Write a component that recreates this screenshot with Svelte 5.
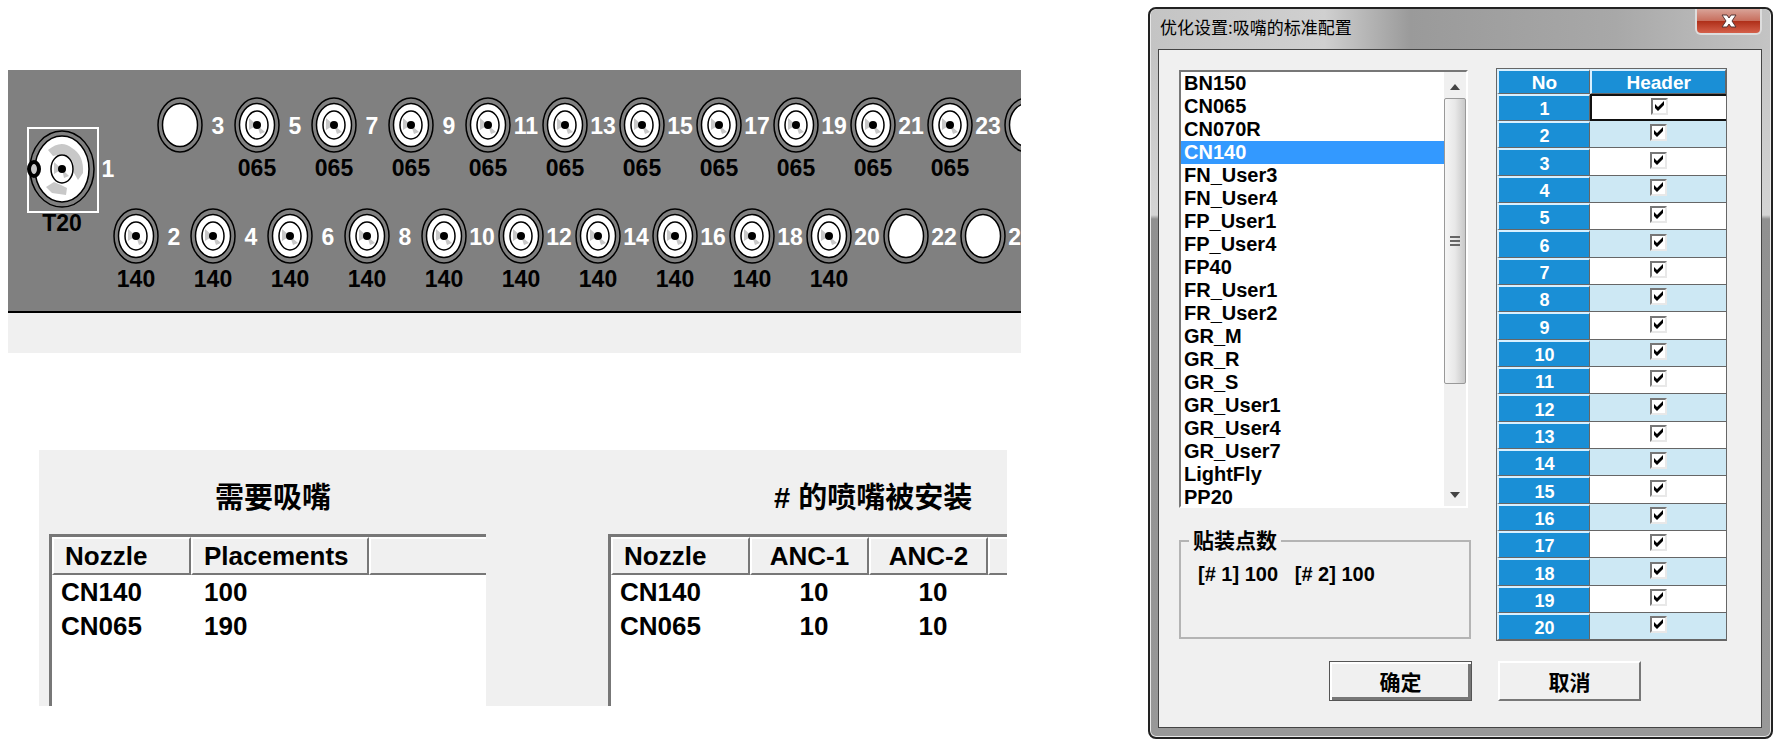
<!--
  App.svelte
  吸嘴配置: nozzle station map, nozzle lists and the standard setup dialog
-->
<script lang="ts">
  interface Station {
    no: number;
    x: number;
    y: number;
    code: string;
  }

  // spacing between stations on the map
  const pitch = 77;

  // odd stations on the upper row, even stations on the lower row
  const upper: Station[] = Array.from({ length: 12 }, (_, i) => ({
    no: 3 + i * 2,
    x: 172 + i * pitch,
    y: 55,
    code: i > 0 && i < 11 ? "065" : "",
  }));

  const lower: Station[] = Array.from({ length: 12 }, (_, i) => ({
    no: 2 + i * 2,
    x: 128 + i * pitch,
    y: 166,
    code: i < 10 ? "140" : "",
  }));

  const stations: Station[] = [...upper, ...lower];

  const required = [
    { nozzle: "CN140", placements: 100 },
    { nozzle: "CN065", placements: 190 },
  ];

  const installed = [
    { nozzle: "CN140", anc1: 10, anc2: 10 },
    { nozzle: "CN065", anc1: 10, anc2: 10 },
  ];

  const nozzleNames = [
    "BN150", "CN065", "CN070R", "CN140", "FN_User3", "FN_User4", "FP_User1",
    "FP_User4", "FP40", "FR_User1", "FR_User2", "GR_M", "GR_R", "GR_S",
    "GR_User1", "GR_User4", "GR_User7", "LightFly", "PP20",
  ];

  let selected = $state("CN140");
  let headers: boolean[] = $state(new Array(20).fill(true));
</script>

<main>
  <div class="boards">
    <section class="map">
      <svg class="stations" role="img" aria-label="ANC">
        <rect x="20" y="58" width="70" height="84" fill="none" stroke="#fff" stroke-width="2" />
        <ellipse class="ring" cx="54" cy="99" rx="32" ry="38" />
        <ellipse class="ring white" cx="54" cy="99" rx="27" ry="33" />
        <path d="M40 80q13-11 24-2 12 7 11 25l-5 7-4-7-1-11-10-8-10 2z" fill="#c8c8c8" />
        <path d="M38 117l8-5 7 3 6 3-1 7-14-2z" fill="#c8c8c8" />
        <ellipse class="ring white" cx="54" cy="99" rx="11" ry="14" />
        <path d="M54 99l-8-7v12zM54 99l2 9 5-2z" fill="#c8c8c8" />
        <circle cx="54" cy="99" r="4" />
        <ellipse cx="26" cy="99" rx="5" ry="7" fill="#c8c8c8" stroke="#000" stroke-width="4" />
        <text class="no" x="100" y="107" text-anchor="middle">1</text>
        <text x="54" y="161" text-anchor="middle">T20</text>

        {#each stations as s}
          <g>
            <ellipse class="ring" cx={s.x} cy={s.y} rx="22" ry="27" />
            <ellipse class="ring white" cx={s.x} cy={s.y} rx="17.5" ry="21.5" />
            {#if s.code}
              <ellipse class="ring white" cx={s.x} cy={s.y} rx="11" ry="14" />
              <path d="M{s.x} {s.y}l-8 -7v12zM{s.x} {s.y}l3 9 5 -2z" fill="#c8c8c8" />
              <circle cx={s.x} cy={s.y} r="4" />
              <text x={s.x} y={s.y + 51} text-anchor="middle">{s.code}</text>
            {/if}
            {#if s.no < 25}
              <text class="no" x={s.x + 38} y={s.y + 9} text-anchor="middle">{s.no}</text>
            {/if}
          </g>
        {/each}
      </svg>
    </section>

    <section class="lists">
      <div class="list required">
        <h2>需要吸嘴</h2>
        <div class="sunken">
          <table>
            <thead>
              <tr><th class="name">Nozzle</th><th class="placements">Placements</th><th></th></tr>
            </thead>
            <tbody>
              {#each required as r}
                <tr><td>{r.nozzle}</td><td class="count">{r.placements}</td><td></td></tr>
              {/each}
            </tbody>
          </table>
        </div>
      </div>
      <div class="list installed">
        <h2># 的喷嘴被安装</h2>
        <div class="sunken">
          <table>
            <thead>
              <tr><th class="name">Nozzle</th><th class="anc">ANC-1</th><th class="anc">ANC-2</th><th></th></tr>
            </thead>
            <tbody>
              {#each installed as r}
                <tr><td>{r.nozzle}</td><td class="num">{r.anc1}</td><td class="num">{r.anc2}</td><td></td></tr>
              {/each}
            </tbody>
          </table>
        </div>
      </div>
    </section>
  </div>

  <div class="dialog" role="dialog" aria-labelledby="title">
    <header>
      <h1 id="title">优化设置:吸嘴的标准配置</h1>
      <button class="close" aria-label="关闭">
        <svg width="16" height="14" viewBox="0 0 16 14">
          <path d="M1 1h5l2 3 2-3h5l-4 6 4 6h-5l-2-3-2 3H1l4-6z" fill="#fff" stroke="#533" />
        </svg>
      </button>
    </header>

    <div class="client">
      <div class="columns">
        <div class="left">
          <div class="listbox">
            <select size="19" aria-label="吸嘴" bind:value={selected}>
              {#each nozzleNames as name}
                <option>{name}</option>
              {/each}
            </select>
            <div class="scrollbar">
              <button aria-label="up"><svg width="10" height="6"><path d="M0 6L5 0l5 6z" fill="#444" /></svg></button>
              <div class="thumb"><i></i><i></i><i></i></div>
              <button class="down" aria-label="down"><svg width="10" height="6"><path d="M0 0h10L5 6z" fill="#444" /></svg></button>
            </div>
          </div>
          <fieldset>
            <legend>贴装点数</legend>
            <p>[# 1] 100   [# 2] 100</p>
          </fieldset>
        </div>

        <table class="heads">
          <thead>
            <tr><th class="index">No</th><th>Header</th></tr>
          </thead>
          <tbody>
            {#each headers as _, i}
              <tr>
                <th>{i + 1}</th>
                <td class:current={i === 0}>
                  <input type="checkbox" aria-label="Header {i + 1}" bind:checked={headers[i]} />
                </td>
              </tr>
            {/each}
          </tbody>
        </table>
      </div>

      <footer>
        <button class="push default">确定</button>
        <button class="push">取消</button>
      </footer>
    </div>
  </div>
</main>

<style>
:global(body) {
  margin: 0;
  background: #fff;
}

main {
  display: flex;
  gap: 127px;
  padding: 7px 9px 7px 8px;
  font-family: "Liberation Sans", "Noto Sans CJK SC", sans-serif;
  color: #000;
}

h1, h2, p {
  margin: 0;
}

button {
  font-family: inherit;
  padding: 0;
}

.boards {
  flex: 1013 1 0;
  min-width: 0;
  padding-top: 63px;
}

/* station map */
.map {
  background: #f0f0f0;
  padding-bottom: 40px;
}

.stations {
  display: block;
  width: 100%;
  height: 241px;
  background: #808080;
  border-bottom: 2px solid #000;
  font-size: 23px;
  font-weight: bold;
}

.no {
  fill: #fff;
}

.ring {
  fill: none;
  stroke: #000;
  stroke-width: 1.5;
}

.white {
  fill: #fff;
}

/* nozzle lists */
.lists {
  display: flex;
  gap: 122px;
  margin: 97px 14px 0 31px;
  padding-left: 10px;
  background: #f0f0f0;
}

.list {
  min-width: 0;
}

.required {
  flex: 437 1 0;
}

.installed {
  flex: 399 1 0;
}

h2 {
  padding: 30px 0 18px 166px;
  font-size: 29px;
  line-height: 36px;
  font-weight: bold;
  white-space: nowrap;
}

.sunken {
  height: 169px;
  border-top: 3px solid #777;
  border-left: 3px solid #777;
  background: #fff;
}

.sunken table {
  width: 100%;
  table-layout: fixed;
  border-collapse: separate;
  border-spacing: 0;
  font-size: 26px;
  line-height: 34px;
  font-weight: bold;
}

.sunken th {
  height: 34px;
  padding: 0 0 0 11px;
  border-top: 2px solid #fff;
  border-left: 2px solid #fff;
  border-right: 2px solid #777;
  border-bottom: 2px solid #777;
  background: #f0f0f0;
  text-align: left;
}

.sunken th:last-child {
  border-right: 0;
}

.sunken .name {
  width: 124px;
}

.sunken .placements {
  width: 163px;
}

.sunken .anc {
  width: 115px;
  padding: 0;
  text-align: center;
}

.sunken td {
  padding: 0 0 0 9px;
}

.sunken .count {
  padding-left: 13px;
}

.sunken .num {
  text-align: center;
}

/* dialog */
.dialog {
  flex: 604 1 0;
  min-width: 0;
  box-sizing: border-box;
  padding: 0 9px 9px 8px;
  border: 2px solid #222;
  border-radius: 8px;
  background: linear-gradient(#c0c0c0, #d4d4d4 206px, #909090 210px, #989898);
  box-shadow: inset 0 0 0 1px #e8e8e8;
}

header {
  display: flex;
  justify-content: space-between;
  height: 40px;
  margin: 0 -8px 0 -7px;
  padding: 0 8px 0 9px;
  background: linear-gradient(90deg, #c4c4c4, #d0d0d0 28%, #9a9a9a 42%, #a8a8a8 75%, #c4c4c4);
  border-radius: 6px 6px 0 0;
}

h1 {
  font-family: "Noto Sans CJK SC", sans-serif;
  font-size: 17px;
  font-weight: normal;
  line-height: 36px;
}

.close {
  display: flex;
  justify-content: center;
  align-items: center;
  width: 67px;
  height: 26px;
  border: 2px solid #ddd;
  border-top: 0;
  border-radius: 0 0 6px 6px;
  background: linear-gradient(#d9a398, #c8705f 48%, #b0301a 52%, #d4604a);
}

.client {
  border: 1px solid #444;
  background: #f0f0f0;
  padding: 18px 34px 26px 20px;
}

.columns {
  display: flex;
  gap: 25px;
}

.left {
  flex: 293 1 0;
  min-width: 0;
}

.listbox {
  display: flex;
  height: 434px;
  margin: 2px 3px 0 0;
  border: 2px solid #fff;
  border-top-color: #777;
  border-left-color: #777;
  background: #fff;
}

select {
  flex: 1;
  min-width: 0;
  height: 434px;
  padding: 0;
  border: 0;
  outline: 0;
  overflow: hidden;
  background: #fff;
  font-family: inherit;
  font-size: 20px;
  scrollbar-width: none;
}

option {
  min-height: 23px;
  padding: 0 0 0 3px;
  line-height: 23px;
  font-weight: bold;
  color: #000;
}

option:checked {
  background: linear-gradient(#39f, #39f);
  -webkit-text-fill-color: #fff;
}

.scrollbar {
  display: flex;
  flex-direction: column;
  width: 22px;
  background: #f0f0f0;
}

.scrollbar button {
  height: 26px;
  border: 0;
  background: none;
}

.scrollbar .down {
  margin-top: auto;
}

.thumb {
  display: flex;
  flex-direction: column;
  justify-content: center;
  align-items: center;
  gap: 2px;
  height: 284px;
  border: 1px solid #999;
  border-radius: 2px;
  background: linear-gradient(90deg, #f5f5f5, #e8e8e8 50%, #c8c8c8);
}

.thumb i {
  width: 10px;
  height: 2px;
  background: #666;
}

fieldset {
  min-width: 0;
  height: 112px;
  box-sizing: border-box;
  margin: 19px 0 0;
  padding: 2px 17px;
  border: 2px solid #b4b4b4;
}

legend {
  margin-left: -9px;
  padding: 0 4px;
  font-size: 21px;
  line-height: 28px;
  font-weight: bold;
}

p {
  font-size: 20px;
  line-height: 34px;
  font-weight: bold;
  white-space: pre;
}

.heads {
  flex: 229 1 0;
  table-layout: fixed;
  border-collapse: separate;
  border-spacing: 0;
  border: 1px solid #666;
  font-size: 18px;
  line-height: 20px;
}

.heads tbody tr {
  height: 27px;
}

.heads tbody tr:nth-child(3n) {
  height: 28px;
}

.heads th {
  padding: 2px 0 0;
  border-top: 2px solid #d8f0ff;
  border-left: 2px solid #d8f0ff;
  border-bottom: 1px solid #666;
  border-right: 1px solid #666;
  background: #1a8fd6;
  color: #fff;
}

.heads thead th {
  font-size: 19px;
  padding: 2px 0 0;
}

.heads .index {
  width: 90px;
}

.heads td {
  padding: 0;
  border-bottom: 1px solid #666;
  background: #fff;
  text-align: center;
}

.heads tr:nth-child(even) td {
  background: #cde8f4;
}

.heads .current {
  border: 2px solid #111;
  border-right: 0;
}

input {
  appearance: none;
  display: block;
  width: 17px;
  height: 17px;
  margin: 0 auto 3px;
  border: 2px solid #777;
  border-right-color: #e8e8e8;
  border-bottom-color: #e8e8e8;
  background: #fff;
}

input:checked {
  background: #fff url("data:image/svg+xml,%3Csvg xmlns='http://www.w3.org/2000/svg' viewBox='0 0 13 13'%3E%3Cpath d='M2 4v4l3 3 6-6V1L5 7z'/%3E%3C/svg%3E");
}

footer {
  display: flex;
  justify-content: flex-end;
  gap: 26px;
  margin-top: 20px;
  padding-right: 86px;
}

.push {
  width: 143px;
  height: 40px;
  border: 2px solid #777;
  border-top-color: #fff;
  border-left-color: #fff;
  background: #f0f0f0;
  font-size: 21px;
  font-weight: bold;
}

.default {
  border: 1px solid #555;
  box-shadow: inset 2px 2px #fff, inset -3px -3px #777;
}
</style>
